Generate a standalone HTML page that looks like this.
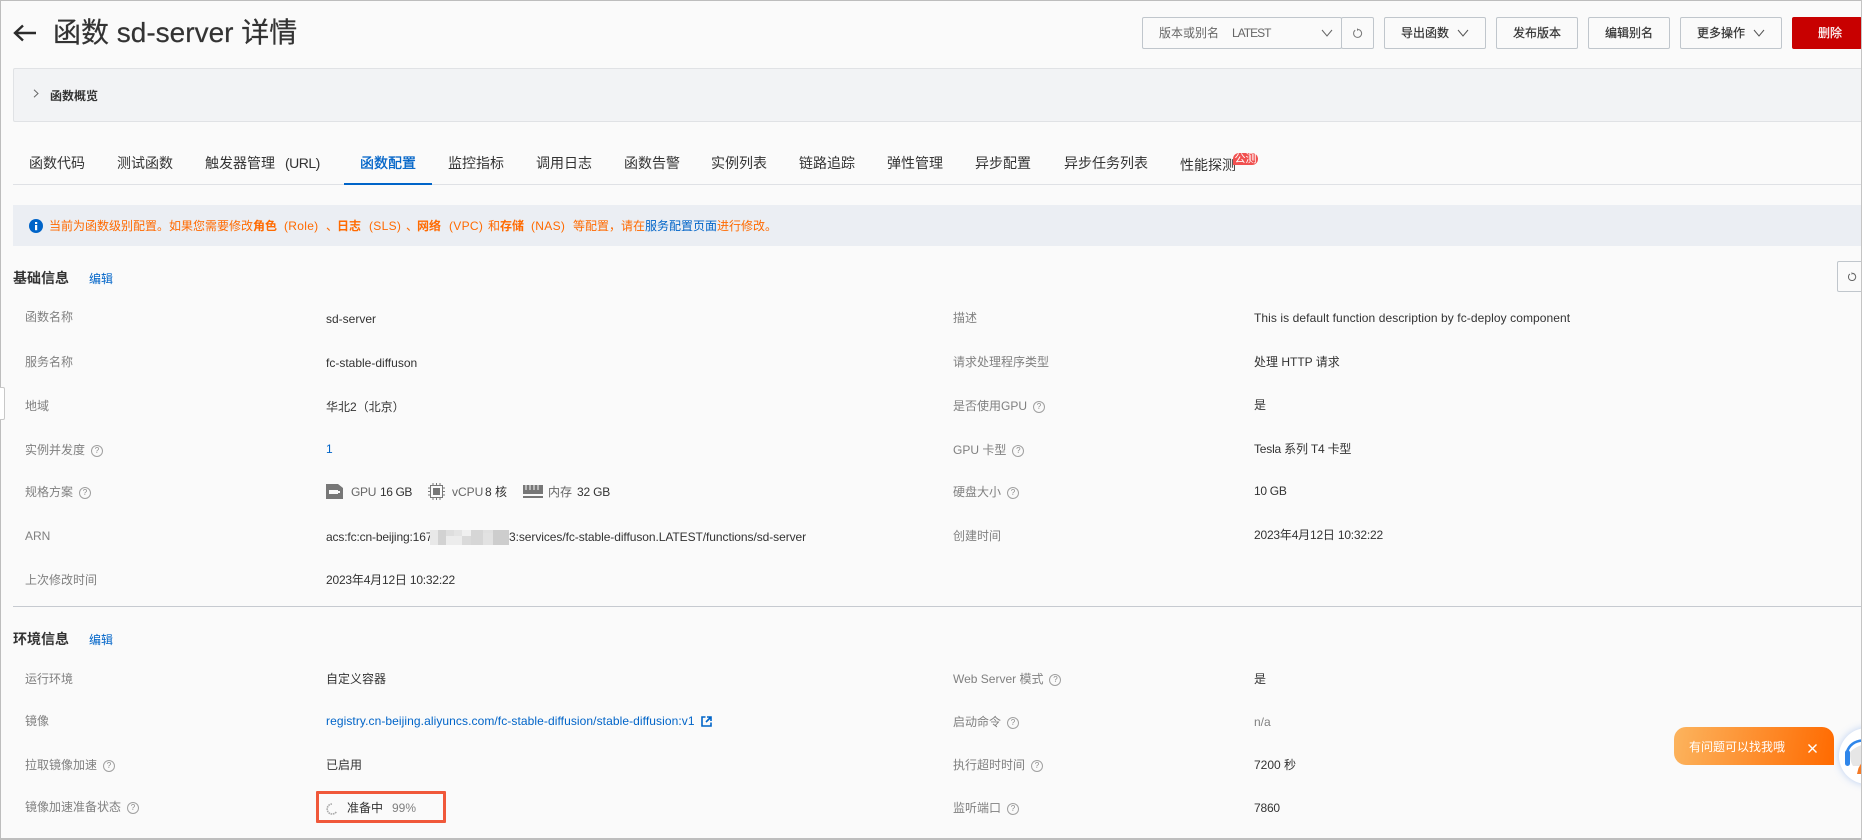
<!DOCTYPE html>
<html lang="zh">
<head>
<meta charset="utf-8">
<title>函数 sd-server 详情</title>
<style>
html,body{margin:0;padding:0;width:1862px;height:840px;overflow:hidden;background:#fafafa;}
body{position:relative;font-family:"Liberation Sans","Noto Sans CJK SC",sans-serif;font-size:12px;color:#333;}
.a{position:absolute;white-space:nowrap;line-height:20px;}
.b{position:absolute;top:17px;height:32px;box-sizing:border-box;border:1px solid #c0c6cc;border-radius:2px;background:#fafafa;line-height:30px;font-size:12px;color:#333;white-space:nowrap;-webkit-text-stroke:.2px #333;}
.tab{position:absolute;top:153px;font-size:14px;line-height:20px;color:#333;white-space:nowrap;}
.l{position:absolute;left:25px;line-height:20px;color:#808080;white-space:nowrap;}
.r{left:953px;}
.v{position:absolute;left:326px;line-height:20px;color:#333;white-space:nowrap;}
.w{left:1254px;}
.sec{position:absolute;left:13px;font-size:14px;font-weight:bold;line-height:20px;color:#333;white-space:nowrap;}
.ed{position:absolute;left:89px;font-size:12px;line-height:20px;color:#0064c8;white-space:nowrap;}
.q{display:inline-block;position:relative;top:-3px;width:10px;height:10px;border:1px solid #a0a0a0;border-radius:50%;font-size:8px;line-height:10px;text-align:center;color:#888;margin-left:6px;vertical-align:-2px;}
.o{position:absolute;top:216px;line-height:20px;color:#ff6a00;white-space:nowrap;}
.o.p{letter-spacing:.3px;}
.o.s{font-weight:bold;}
svg{position:absolute;overflow:visible;}
</style>
</head>
<body>
<!-- frame -->
<div style="position:absolute;left:0;top:0;width:1862px;height:1px;background:#bdbdbd"></div>
<div style="position:absolute;left:0;top:0;width:1px;height:840px;background:#bdbdbd"></div>
<div style="position:absolute;left:0;top:838px;width:1862px;height:2px;background:#bdbdbd"></div>

<!-- header -->
<svg style="left:13px;top:24px" width="24" height="18" viewBox="0 0 24 18"><path d="M23 9H2M10 1.5 2 9l8 7.5" fill="none" stroke="#2b2b2b" stroke-width="2.4"/></svg>
<div class="a" style="left:53px;top:13px;font-size:28px;line-height:40px;color:#333;-webkit-text-stroke:.2px #333">函数 sd-server 详情</div>

<div class="b" style="left:1142px;width:200px;color:#666;-webkit-text-stroke:0;padding-left:16px">版本或别名</div>
<div class="a" style="left:1232px;top:23px;color:#666;letter-spacing:-1px">LATEST</div>
<svg style="left:1321px;top:29px" width="12" height="8" viewBox="0 0 12 8"><path d="M1 1l5 6 5-6" fill="none" stroke="#666" stroke-width="1"/></svg>
<div class="b" style="left:1341px;width:33px"></div>
<svg style="left:1352px;top:28px" width="11" height="11" viewBox="0 0 11 11"><path d="M6.5 1.5A4 4 0 1 1 3.2 2.2" fill="none" stroke="#777" stroke-width="1"/><path d="M5 .2 7 1.6 5 3z" fill="#777"/></svg>
<div class="b" style="left:1384px;width:102px;padding-left:16px">导出函数</div>
<svg style="left:1457px;top:29px" width="12" height="8" viewBox="0 0 12 8"><path d="M1 1l5 6 5-6" fill="none" stroke="#555" stroke-width="1"/></svg>
<div class="b" style="left:1496px;width:82px;text-align:center">发布版本</div>
<div class="b" style="left:1588px;width:82px;text-align:center">编辑别名</div>
<div class="b" style="left:1680px;width:102px;padding-left:16px">更多操作</div>
<svg style="left:1753px;top:29px" width="12" height="8" viewBox="0 0 12 8"><path d="M1 1l5 6 5-6" fill="none" stroke="#555" stroke-width="1"/></svg>
<div class="b" style="left:1792px;width:70px;background:#c80000;border-color:#c80000;color:#fff;-webkit-text-stroke:.2px #fff;padding-left:25px">删除</div>

<!-- overview -->
<div style="position:absolute;left:13px;top:68px;width:1849px;height:54px;box-sizing:border-box;background:#f2f3f5;border:1px solid #e0e2e5;border-right:0;border-radius:2px 0 0 2px"></div>
<svg style="left:33px;top:89px" width="6" height="9" viewBox="0 0 6 9"><path d="M1 .8 5 4.5 1 8.2" fill="none" stroke="#666" stroke-width="1"/></svg>
<div class="a" style="left:50px;top:86px;font-weight:bold;color:#333">函数概览</div>

<!-- tabs -->
<div class="tab" style="left:29px">函数代码</div>
<div class="tab" style="left:117px">测试函数</div>
<div class="tab" style="left:205px">触发器管理<span style="margin-left:10px;letter-spacing:-.5px">(URL)</span></div>
<div class="tab" style="left:360px;color:#0064c8;-webkit-text-stroke:.3px #0064c8">函数配置</div>
<div class="tab" style="left:448px">监控指标</div>
<div class="tab" style="left:536px">调用日志</div>
<div class="tab" style="left:624px">函数告警</div>
<div class="tab" style="left:711px">实例列表</div>
<div class="tab" style="left:799px">链路追踪</div>
<div class="tab" style="left:887px">弹性管理</div>
<div class="tab" style="left:975px">异步配置</div>
<div class="tab" style="left:1064px">异步任务列表</div>
<div class="tab" style="left:1180px;top:155px">性能探测</div>
<div class="a" style="left:1233px;top:153px;width:25px;height:12px;background:#f0504f;border-radius:6px 6px 6px 0;color:#fff;font-size:11px;line-height:12px;text-align:center">公测</div>
<div style="position:absolute;left:13px;top:184px;width:1849px;height:1px;background:#dfe1e5"></div>
<div style="position:absolute;left:344px;top:183px;width:88px;height:2px;background:#0064c8"></div>

<!-- alert -->
<div style="position:absolute;left:13px;top:205px;width:1849px;height:41px;background:#ebeef3"></div>
<svg style="left:29px;top:219px" width="14" height="14" viewBox="0 0 14 14"><circle cx="7" cy="7" r="7" fill="#0064c8"/><rect x="6" y="6" width="2.2" height="5.2" fill="#fff"/><rect x="6" y="3" width="2.2" height="2" fill="#fff"/></svg>
<div class="o" style="left:49px">当前为函数级别配置。如果您需要修改</div>
<div class="o s" style="left:253px">角色</div>
<div class="o p" style="left:284px">(Role)</div>
<div class="o" style="left:326px">、</div>
<div class="o s" style="left:337px">日志</div>
<div class="o p" style="left:369px">(SLS)</div>
<div class="o" style="left:406px">、</div>
<div class="o s" style="left:417px">网络</div>
<div class="o p" style="left:449px">(VPC)</div>
<div class="o" style="left:488px">和</div>
<div class="o s" style="left:500px">存储</div>
<div class="o p" style="left:531px">(NAS)</div>
<div class="o" style="left:573px">等配置，请在</div>
<div class="o" style="left:645px;color:#0064c8">服务配置页面</div>
<div class="o" style="left:717px">进行修改。</div>

<!-- basic info -->
<div class="sec" style="top:268px">基础信息</div>
<div class="ed" style="top:269px">编辑</div>
<div class="b" style="left:1837px;top:261px;width:26px;height:31px"></div>
<svg style="left:1847px;top:272px" width="10" height="10" viewBox="0 0 11 11"><path d="M6.5 1.5A4 4 0 1 1 3.2 2.2" fill="none" stroke="#666" stroke-width="1.1"/><path d="M5 .2 7 1.6 5 3z" fill="#666"/></svg>
<div style="position:absolute;left:0;top:387px;width:5px;height:33px;box-sizing:border-box;background:#fff;border:1px solid #c8c8c8;border-left:0;border-radius:0 2px 2px 0"></div>

<div class="l" style="top:307px">函数名称</div><div class="v" style="top:309px">sd-server</div>
<div class="l" style="top:352px">服务名称</div><div class="v" style="top:353px">fc-stable-diffuson</div>
<div class="l" style="top:396px">地域</div><div class="v" style="top:397px">华北2（北京）</div>
<div class="l" style="top:440px">实例并发度<span class="q">?</span></div><div class="v" style="top:439px;color:#0064c8">1</div>
<div class="l" style="top:482px">规格方案<span class="q">?</span></div>

<svg style="left:326px;top:484px" width="18" height="15" viewBox="0 0 18 15"><path d="M0 0h12l5 4v11H0z" fill="#777"/><rect x="3" y="6" width="9" height="4" fill="#fafafa"/><rect x="12" y="7" width="2" height="2" fill="#fafafa"/></svg>
<div class="v" style="left:351px;top:482px;color:#666;letter-spacing:-.3px">GPU</div>
<div class="v" style="left:380px;top:482px;letter-spacing:-.4px">16 GB</div>
<svg style="left:428px;top:483px" width="17" height="17" viewBox="0 0 17 17"><rect x="2.5" y="2.5" width="12" height="12" fill="none" stroke="#777"/><rect x="5" y="5" width="7" height="7" fill="#777"/><path d="M5 0v2M8.5 0v2M12 0v2M5 15v2M8.5 15v2M12 15v2M0 5h2M0 8.5h2M0 12h2M15 5h2M15 8.5h2M15 12h2" stroke="#777"/></svg>
<div class="v" style="left:452px;top:482px;color:#666">vCPU</div>
<div class="v" style="left:485px;top:482px">8 核</div>
<svg style="left:523px;top:485px" width="20" height="13" viewBox="0 0 20 13"><path d="M0 0h20v9H0z" fill="#777"/><path d="M3 0v5M7 0v5M11 0v5M15 0v5" stroke="#fafafa"/><path d="M0 11h20v2H0z" fill="#777"/></svg>
<div class="v" style="left:548px;top:482px;color:#666">内存</div>
<div class="v" style="left:577px;top:482px;letter-spacing:-.2px">32 GB</div>

<div class="l" style="top:526px">ARN</div><div class="v" style="top:527px;letter-spacing:-.15px">acs:fc:cn-beijing:167</div>
<svg style="left:430px;top:530px" width="79" height="15" viewBox="0 0 79 15"><rect width="79" height="15" fill="#e0e0e0"/><rect x="0" y="0" width="8" height="15" fill="#e8e8e8"/><rect x="8" y="0" width="8" height="15" fill="#d2d2d2"/><rect x="16" y="0" width="8" height="6" fill="#dedede"/><rect x="16" y="6" width="16" height="9" fill="#ececec"/><rect x="24" y="0" width="8" height="6" fill="#e4e4e4"/><rect x="32" y="0" width="9" height="15" fill="#f0f0f0"/><rect x="32" y="6" width="9" height="9" fill="#dadada"/><rect x="41" y="0" width="12" height="15" fill="#d6d6d6"/><rect x="53" y="3" width="10" height="12" fill="#e2e2e2"/><rect x="63" y="0" width="16" height="15" fill="#cdcdcd"/></svg>
<div class="v" style="left:509px;top:527px;letter-spacing:-.07px">3:services/fc-stable-diffuson.LATEST/functions/sd-server</div>
<div class="l" style="top:570px">上次修改时间</div><div class="v" style="top:570px;letter-spacing:-.2px">2023年4月12日 10:32:22</div>

<div class="l r" style="top:308px">描述</div><div class="v w" style="top:308px;letter-spacing:.08px">This is default function description by fc-deploy component</div>
<div class="l r" style="top:352px">请求处理程序类型</div><div class="v w" style="top:352px">处理 HTTP 请求</div>
<div class="l r" style="top:396px">是否使用GPU<span class="q">?</span></div><div class="v w" style="top:395px">是</div>
<div class="l r" style="top:440px">GPU 卡型<span class="q">?</span></div><div class="v w" style="top:439px;letter-spacing:-.2px">Tesla 系列 T4 卡型</div>
<div class="l r" style="top:482px">硬盘大小<span class="q">?</span></div><div class="v w" style="top:481px;letter-spacing:-.3px">10 GB</div>
<div class="l r" style="top:526px">创建时间</div><div class="v w" style="top:525px;letter-spacing:-.2px">2023年4月12日 10:32:22</div>

<div style="position:absolute;left:13px;top:606px;width:1849px;height:1px;background:#c6cad0"></div>

<!-- env info -->
<div class="sec" style="top:629px">环境信息</div>
<div class="ed" style="top:630px">编辑</div>

<div class="l" style="top:669px">运行环境</div><div class="v" style="top:669px">自定义容器</div>
<div class="l" style="top:711px">镜像</div><div class="v" style="top:711px;color:#0064c8;letter-spacing:.08px">registry.cn-beijing.aliyuncs.com/fc-stable-diffusion/stable-diffusion:v1</div>
<svg style="left:701px;top:716px" width="11" height="11" viewBox="0 0 11 11"><path d="M4.5 1H1v9h9V6.5M6 1h4v4M10 1 5 6" fill="none" stroke="#0064c8" stroke-width="1.6"/></svg>
<div class="l" style="top:755px">拉取镜像加速<span class="q">?</span></div><div class="v" style="top:755px">已启用</div>
<div class="l" style="top:797px">镜像加速准备状态<span class="q">?</span></div>

<div style="position:absolute;left:316px;top:791px;width:130px;height:32px;box-sizing:border-box;border:3px solid #f0583a;border-radius:1px"></div>
<svg style="left:326px;top:803px" width="12" height="12" viewBox="0 0 12 12"><path d="M6 1A5 5 0 1 0 10.5 8.5" fill="none" stroke="#aaa" stroke-width="1.6" stroke-dasharray="1.6 .7"/></svg>
<div class="v" style="left:347px;top:798px">准备中</div>
<div class="v" style="left:392px;top:798px;color:#808080">99%</div>

<div class="l r" style="top:669px">Web Server 模式<span class="q">?</span></div><div class="v w" style="top:669px">是</div>
<div class="l r" style="top:712px">启动命令<span class="q">?</span></div><div class="v w" style="top:712px;color:#808080">n/a</div>
<div class="l r" style="top:755px">执行超时时间<span class="q">?</span></div><div class="v w" style="top:755px">7200 秒</div>
<div class="l r" style="top:798px">监听端口<span class="q">?</span></div><div class="v w" style="top:798px;letter-spacing:-.2px">7860</div>

<!-- helper -->
<div style="position:absolute;left:1839px;top:728px;width:56px;height:56px;border-radius:50%;background:#fff;box-shadow:0 0 8px rgba(70,130,230,.35)"></div>
<div style="position:absolute;left:1674px;top:727px;width:160px;height:38px;border-radius:12px 12px 0 12px;background:linear-gradient(100deg,#fcb45e,#ff6a00)"></div>
<div class="a" style="left:1689px;top:737px;color:#fff">有问题可以找我哦</div>
<svg style="left:1808px;top:744px" width="9" height="9" viewBox="0 0 9 9"><path d="M.5.5l8 8M8.5.5l-8 8" stroke="#fff" stroke-width="1.4"/></svg>
<svg style="left:1843px;top:738px" width="18" height="44" viewBox="0 0 18 44"><path d="M7 15C8 11 18 7 19 7V28H10Q7 24 7 15z" fill="#e6e6e6"/><path d="M4 14C6 7 12 3 19 2.500" fill="none" stroke="#2f86ea" stroke-width="2.600"/><rect x="2" y="12" width="5" height="16" rx="2.500" fill="#2f86ea"/><path d="M19 24 15.500 30 14 36H19z" fill="#f47a26"/></svg>
<div style="position:absolute;left:1861px;top:0;width:1px;height:840px;background:#c4c4c4"></div>
</body>
</html>
